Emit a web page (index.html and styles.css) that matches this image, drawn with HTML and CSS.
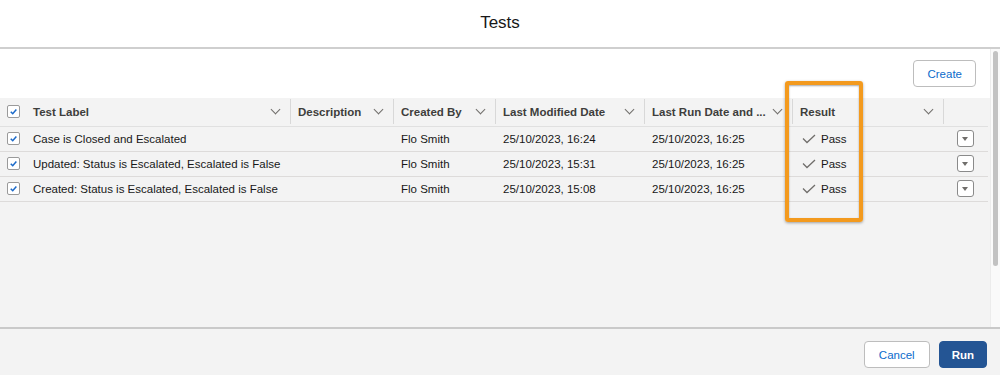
FILE: index.html
```html
<!DOCTYPE html>
<html lang="en">
<head>
    <meta charset="UTF-8">
    <title>Tests</title>
    <link rel="stylesheet" href="styles.css">
</head>
<body>
    <div class="modal">
        <header class="modal-header">Tests</header>
        <div class="modal-body">
            <div class="content">
                <div class="toolbar">
                    <button class="btn btn-neutral">Create</button>
                </div>
                <table class="grid">
                    <colgroup>
                        <col class="c-check">
                        <col class="c-label">
                        <col class="c-desc">
                        <col class="c-by">
                        <col class="c-mod">
                        <col class="c-run">
                        <col class="c-result">
                        <col class="c-action">
                    </colgroup>
                    <thead>
                        <tr>
                            <th class="cell-check"><span class="checkbox"><svg viewBox="0 0 10 10"><polyline points="2.5,5.2 4.3,7 7.6,3.2"/></svg></span></th>
                            <th><div class="th-inner"><span>Test Label</span><span class="chev"></span></div></th>
                            <th><div class="th-inner"><span>Description</span><span class="chev"></span></div></th>
                            <th><div class="th-inner"><span>Created By</span><span class="chev"></span></div></th>
                            <th><div class="th-inner"><span>Last Modified Date</span><span class="chev"></span></div></th>
                            <th><div class="th-inner"><span>Last Run Date and ...</span><span class="chev"></span></div></th>
                            <th><div class="th-inner"><span>Result</span><span class="chev"></span></div></th>
                            <th class="th-last"></th>
                        </tr>
                    </thead>
                    <tbody>
                        <tr>
                            <td class="cell-check"><span class="checkbox"><svg viewBox="0 0 10 10"><polyline points="2.5,5.2 4.3,7 7.6,3.2"/></svg></span></td>
                            <td>Case is Closed and Escalated</td>
                            <td></td>
                            <td>Flo Smith</td>
                            <td>25/10/2023, 16:24</td>
                            <td>25/10/2023, 16:25</td>
                            <td><span class="pass"><svg class="tick" viewBox="0 0 14 10"><polyline points="1,4.5 5,8.5 13,1"/></svg>Pass</span></td>
                            <td class="cell-action"><span class="menu-btn"></span></td>
                        </tr>
                        <tr>
                            <td class="cell-check"><span class="checkbox"><svg viewBox="0 0 10 10"><polyline points="2.5,5.2 4.3,7 7.6,3.2"/></svg></span></td>
                            <td>Updated: Status is Escalated, Escalated is False</td>
                            <td></td>
                            <td>Flo Smith</td>
                            <td>25/10/2023, 15:31</td>
                            <td>25/10/2023, 16:25</td>
                            <td><span class="pass"><svg class="tick" viewBox="0 0 14 10"><polyline points="1,4.5 5,8.5 13,1"/></svg>Pass</span></td>
                            <td class="cell-action"><span class="menu-btn"></span></td>
                        </tr>
                        <tr>
                            <td class="cell-check"><span class="checkbox"><svg viewBox="0 0 10 10"><polyline points="2.5,5.2 4.3,7 7.6,3.2"/></svg></span></td>
                            <td>Created: Status is Escalated, Escalated is False</td>
                            <td></td>
                            <td>Flo Smith</td>
                            <td>25/10/2023, 15:08</td>
                            <td>25/10/2023, 16:25</td>
                            <td><span class="pass"><svg class="tick" viewBox="0 0 14 10"><polyline points="1,4.5 5,8.5 13,1"/></svg>Pass</span></td>
                            <td class="cell-action"><span class="menu-btn"></span></td>
                        </tr>
                    </tbody>
                </table>
            </div>
            <div class="scrollbar"><div class="thumb"></div></div>
        </div>
        <footer class="modal-footer">
            <button class="btn btn-neutral btn-cancel">Cancel</button>
            <button class="btn btn-brand">Run</button>
        </footer>
        <div class="highlight"></div>
    </div>
</body>
</html>
```

FILE: styles.css
```css
* {
    box-sizing: border-box;
    margin: 0;
    padding: 0;
}
body {
    font-family: 'Liberation Sans', Arial, sans-serif;
    font-size: 11.5px;
    color: #181818;
    background: #fff;
    width: 1000px;
    height: 375px;
    overflow: hidden;
}
.modal {
    position: relative;
    display: flex;
    flex-direction: column;
    height: 375px;
}
.modal-header {
    height: 49px;
    border-bottom: 2px solid #cfcfcf;
    text-align: center;
    font-size: 17px;
    line-height: 45px;
    color: #181818;
}
.modal-body {
    display: flex;
    height: 278px;
    background: #f3f3f3;
}
.content {
    flex: 1;
}
.toolbar {
    height: 49px;
    background: #fff;
    display: flex;
    justify-content: flex-end;
    align-items: flex-start;
    padding: 11px 14px 0 0;
}
.btn {
    font-family: inherit;
    font-size: 11.5px;
    height: 27px;
    border-radius: 4px;
    cursor: pointer;
}
.btn-neutral {
    background: #fff;
    color: #0b6bcb;
    border: 1px solid #bdbdbd;
    padding: 0 13px;
}
.btn-cancel {
    padding: 0 14px;
}
.btn-brand {
    background: #245594;
    color: #fff;
    border: 1px solid #245594;
    font-weight: 600;
    padding: 0 12px;
}
.grid {
    width: 988px;
    table-layout: fixed;
    border-collapse: collapse;
}
.c-check { width: 26px; }
.c-label { width: 265px; }
.c-desc { width: 103px; }
.c-by { width: 102px; }
.c-mod { width: 149px; }
.c-run { width: 148px; }
.c-result { width: 151px; }
.c-action { width: 44px; }
.grid th {
    height: 28px;
    text-align: left;
    font-weight: bold;
    color: #3e3e3c;
    background: #f3f3f3;
    border-bottom: 1px solid #e0e0e0;
    padding: 0;
}
.th-inner {
    display: flex;
    align-items: center;
    justify-content: space-between;
    height: 25px;
    padding: 0 11px 0 7px;
    border-right: 1px solid #d8d8d8;
}
.th-last {
    border-right: none;
}
.chev {
    width: 7px;
    height: 7px;
    border-right: 1.3px solid #706e6b;
    border-bottom: 1.3px solid #706e6b;
    transform: rotate(45deg);
    margin-top: -4px;
}
.grid td {
    height: 25px;
    padding: 0 7px;
    border-bottom: 1px solid #dddbda;
    white-space: nowrap;
    overflow: hidden;
}
.grid .cell-check {
    padding: 0 0 0 7px;
}
.checkbox {
    display: block;
    width: 13px;
    height: 13px;
    border: 1px solid #9a9a9a;
    border-radius: 2px;
    background: #fff;
}
.checkbox svg {
    display: block;
    width: 11px;
    height: 11px;
    fill: none;
    stroke: #1b6ac9;
    stroke-width: 1.4;
}
.pass {
    display: flex;
    align-items: center;
    padding-left: 2px;
    color: #181818;
}
.tick {
    width: 14px;
    height: 10px;
    margin-right: 5px;
    fill: none;
    stroke: #706e6b;
    stroke-width: 1.3;
}
.grid .cell-action {
    padding: 0 0 0 13px;
}
.menu-btn {
    display: block;
    position: relative;
    width: 17px;
    height: 17px;
    border: 1px solid #8a8a8a;
    border-radius: 3px;
    background: #fff;
}
.menu-btn::after {
    content: "";
    position: absolute;
    left: 4px;
    top: 6px;
    border-left: 3.5px solid transparent;
    border-right: 3.5px solid transparent;
    border-top: 4px solid #706e6b;
}
.scrollbar {
    width: 10px;
    background: #fafafa;
    border-left: 1px solid #ececec;
    padding: 2px 2px 0 2px;
}
.thumb {
    height: 215px;
    border-radius: 3px;
    background: #c2c2c2;
}
.modal-footer {
    flex: 1;
    display: flex;
    justify-content: flex-end;
    align-items: flex-start;
    gap: 9px;
    padding: 12px 13px 0 0;
    background: #f3f3f3;
    border-top: 2px solid #c9c9c9;
}
.highlight {
    position: absolute;
    left: 785px;
    top: 81px;
    width: 78px;
    height: 141px;
    border: 4px solid #f39a1e;
    border-radius: 3px;
    box-shadow: 0 1px 3px rgba(0, 0, 0, 0.35), inset 0 1px 2px rgba(0, 0, 0, 0.35);
}
```
